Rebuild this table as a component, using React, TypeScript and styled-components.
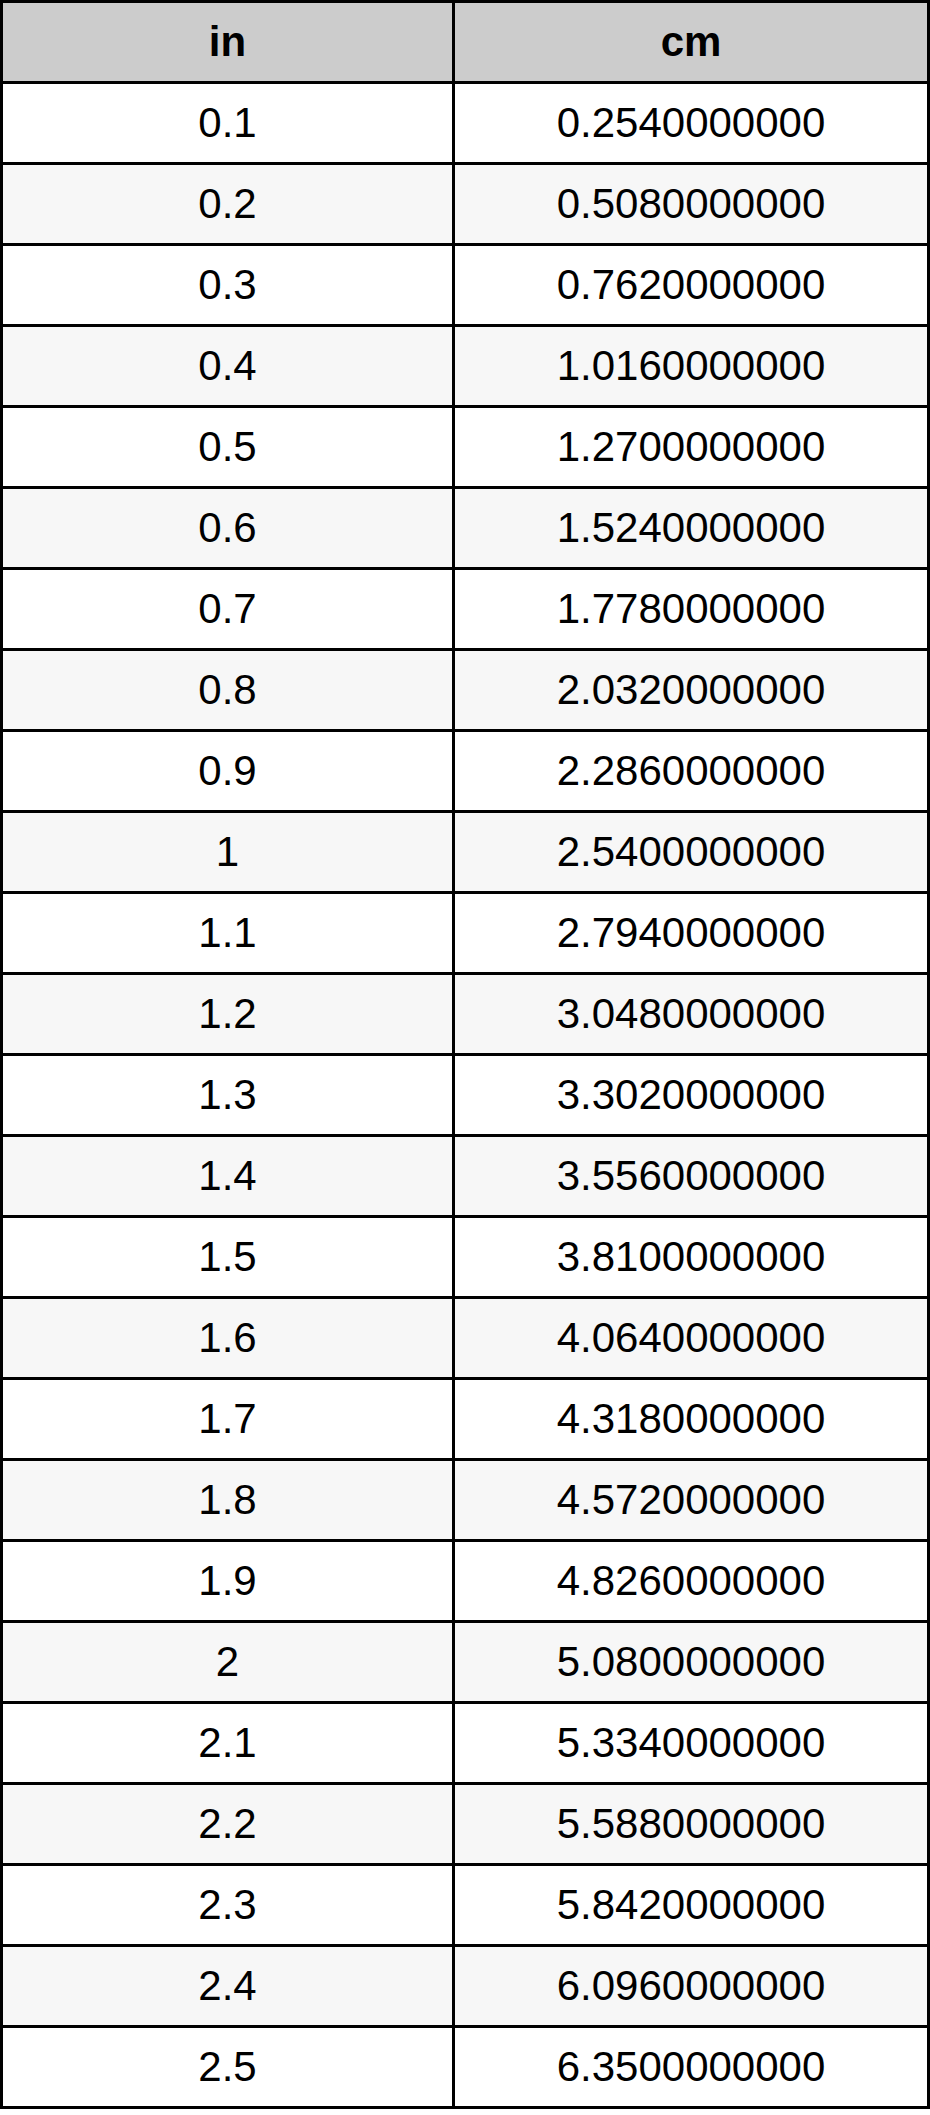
import styled, { createGlobalStyle } from "styled-components";

const GlobalStyle = createGlobalStyle`
    html, body {
        margin: 0;
        padding: 0;
        background: #ffffff;
    }
`;

// inches in 0.1 steps, 0.1 .. 2.5
const rows = Array.from({ length: 25 }, (_, i) => {
    const inches = (i + 1) / 10;
    return {
        inches: String(Number(inches.toFixed(1))),
        cm: (inches * 2.54).toFixed(10),
    };
});

const App = () => {
    return (
        <>
            <GlobalStyle />
            <Table>
                <HeaderCell>in</HeaderCell>
                <HeaderCell>cm</HeaderCell>
                {rows.map((row, i) => (
                    <Row key={row.inches}>
                        <Cell $striped={i % 2 === 1}>{row.inches}</Cell>
                        <Cell $striped={i % 2 === 1}>{row.cm}</Cell>
                    </Row>
                ))}
            </Table>
        </>
    );
};

export default App;

const Table = styled.div`
    display: grid;
    grid-template-columns: 449px 472px;
    grid-auto-rows: 78px;
    gap: 3px;
    padding: 3px;
    width: 930px;
    box-sizing: border-box;
    background-color: #000000;
    font-family: "Liberation Sans", Arial, sans-serif;
    font-size: 42px;
    color: #000000;
`;

const Row = styled.div`
    display: contents;
`;

const Cell = styled.div<{ $striped: boolean }>`
    display: flex;
    align-items: center;
    justify-content: center;
    line-height: 78px;
    background-color: ${props => (props.$striped ? "#f7f7f7" : "#ffffff")};
`;

const HeaderCell = styled(Cell).attrs({ $striped: false })`
    font-weight: bold;
    background-color: #cccccc;
`;
